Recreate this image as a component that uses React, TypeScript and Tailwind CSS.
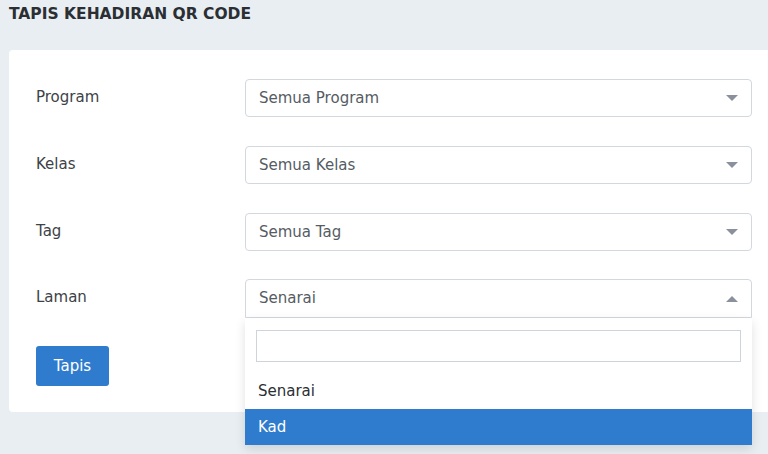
import React from "react";

const rows = [
  { label: "Program", value: "Semua Program" },
  { label: "Kelas", value: "Semua Kelas" },
  { label: "Tag", value: "Semua Tag" },
];

function Caret({ up = false }: { up?: boolean }) {
  return (
    <svg width="12" height="7" viewBox="0 0 12 7" className="shrink-0">
      {up ? <path d="M0 7 L6 1 L12 7 Z" fill="#8a919c" /> : <path d="M0 0 L12 0 L6 6 Z" fill="#8a919c" />}
    </svg>
  );
}

export default function App() {
  return (
    <div
      className="h-[454px] w-[768px] overflow-hidden bg-[#e8eef2] pl-[9px]"
      style={{ fontFamily: '"DejaVu Sans", "Open Sans", sans-serif' }}
    >
      <h1 className="h-[50px] pt-[4px] text-[15.5px] font-bold leading-[20px] text-[#2b2f33]">TAPIS KEHADIRAN QR CODE</h1>

      <div className="w-[770px] rounded-[4px] bg-white pl-[27px] pr-[27px] pt-[29px] pb-[26px]">
        <div className="flex flex-col gap-[29px]">
          {rows.map((r) => (
            <div key={r.label} className="flex items-center">
              <div className="w-[209px] -translate-y-[1px] text-[15px] text-[#3d4247]">{r.label}</div>
              <div className="flex h-[38px] flex-1 items-center justify-between rounded-[4px] border border-[#d3d8de] pl-[13px] pr-[13px] text-[15px] text-[#555c63]">
                <span>{r.value}</span>
                <Caret />
              </div>
            </div>
          ))}

          <div className="-mt-px flex items-center">
            <div className="w-[209px] -translate-y-[1px] text-[15px] text-[#3d4247]">Laman</div>
            <div className="relative flex-1">
              <div className="flex h-[39px] items-center justify-between rounded-t-[4px] border border-[#d3d8de] pl-[13px] pr-[13px] text-[15px] text-[#555c63]">
                <span>Senarai</span>
                <Caret up />
              </div>
              <div className="absolute left-0 right-0 top-[39px] z-10 bg-white shadow-[0_4px_10px_rgba(0,0,0,0.12)]">
                <div className="px-[11px] pt-[12px] pb-[11px]">
                  <div className="h-[32px] border border-[#cfd4da] bg-white" />
                </div>
                <div className="flex h-[36px] items-center pl-[13px] text-[15px] text-[#2b2f33]">Senarai</div>
                <div className="flex h-[36px] items-center bg-[#2f7bcd] pl-[13px] text-[15px] text-white">Kad</div>
              </div>
            </div>
          </div>
        </div>

        <button className="mt-[28px] flex h-[40px] w-[73px] items-center justify-center rounded-[3px] bg-[#2f7bcd] text-[15px] text-white">
          Tapis
        </button>
      </div>
    </div>
  );
}
